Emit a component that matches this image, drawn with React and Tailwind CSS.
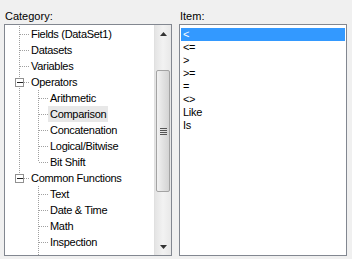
import React from 'react';

const tree = [
  { label: 'Fields (DataSet1)', level: 0 },
  { label: 'Datasets', level: 0 },
  { label: 'Variables', level: 0 },
  { label: 'Operators', level: 0, box: true },
  { label: 'Arithmetic', level: 1, rootLine: true },
  { label: 'Comparison', level: 1, rootLine: true, hot: true },
  { label: 'Concatenation', level: 1, rootLine: true },
  { label: 'Logical/Bitwise', level: 1, rootLine: true },
  { label: 'Bit Shift', level: 1, rootLine: true, last: true },
  { label: 'Common Functions', level: 0, box: true, last: true },
  { label: 'Text', level: 1 },
  { label: 'Date & Time', level: 1 },
  { label: 'Math', level: 1 },
  { label: 'Inspection', level: 1 },
  // next child is scrolled out of view, only its line shows
  { label: '', level: 1 },
];

const items = ['<', '<=', '>', '>=', '=', '<>', 'Like', 'Is'];

const dot = { stroke: '#a0a0a0', strokeWidth: 1, strokeDasharray: '1 1', shapeRendering: 'crispEdges' };

function Lines({ row }) {
  const w = row.level === 0 ? 23 : 42;
  return (
    <svg width={w} height="16" className="shrink-0">
      {row.level === 0 && (
        <>
          <line x1="13.5" y1="0" x2="13.5" y2={row.last ? 8 : 16} style={dot} />
          <line x1={row.box ? 18 : 14} y1="8.5" x2="23" y2="8.5" style={dot} />
          {row.box && (
            <g shapeRendering="crispEdges">
              <rect x="9.5" y="4.5" width="8" height="8" fill="#fff" stroke="#919191" />
              <line x1="11" y1="8.5" x2="17" y2="8.5" stroke="#222" />
            </g>
          )}
        </>
      )}
      {row.level === 1 && (
        <>
          {row.rootLine && <line x1="13.5" y1="0" x2="13.5" y2="16" style={dot} />}
          <line x1="32.5" y1="0" x2="32.5" y2={row.last ? 8 : 16} style={dot} />
          {row.label && <line x1="33" y1="8.5" x2="42" y2="8.5" style={dot} />}
        </>
      )}
    </svg>
  );
}

function Arrow({ up }) {
  return (
    <div className="h-[17px] flex items-center justify-center">
      <svg width="7" height="4">
        <path d={up ? 'M3.5 0 L7 4 L0 4 Z' : 'M0 0 L7 0 L3.5 4 Z'} fill="#333" />
      </svg>
    </div>
  );
}

export default function App() {
  return (
    <div
      className="w-[352px] h-[259px] bg-[#f0f0f0] flex gap-[7px] pl-[4px] pt-[8px] text-[11px] text-black"
      style={{ fontFamily: '"Liberation Sans", Arial, sans-serif' }}
    >
      {/* Category tree */}
      <div className="w-[168px] flex flex-col">
        <div className="h-[16px] leading-[17px] pl-[1px]">Category:</div>
        <div className="h-[232px] border border-[#828790] bg-white flex">
          <div className="flex-1 overflow-hidden pt-px pl-[1px]">
            {tree.map((row, i) => (
              <div key={i} className="h-4 flex items-center">
                <Lines row={row} />
                {row.label && (
                  <span className={`px-[2px] leading-4 whitespace-nowrap tracking-[-0.3px] ${row.hot ? 'bg-[#e8e8e8]' : ''}`}>
                    {row.label}
                  </span>
                )}
              </div>
            ))}
          </div>
          <div className="w-[17px] flex flex-col bg-linear-to-r from-[#e4e4e4] via-[#f2f2f2] to-[#e8e8e8] border-l border-[#e0e0e0]">
            <Arrow up />
            <div className="flex-1">
              <div className="mt-[28px] h-[122px] mx-[1px] rounded-[2px] border border-[#a3a3a3] bg-linear-to-r from-[#f2f2f2] via-[#e2e2e2] to-[#d4d4d4] flex flex-col items-center justify-center gap-[1px]">
                <div className="w-[7px] h-px bg-[#555]" />
                <div className="w-[7px] h-px bg-[#555]" />
                <div className="w-[7px] h-px bg-[#555]" />
                <div className="w-[7px] h-px bg-[#555]" />
              </div>
            </div>
            <Arrow />
          </div>
        </div>
      </div>

      {/* Item list */}
      <div className="w-[168px] flex flex-col">
        <div className="h-[16px] leading-[17px] pl-[1px]">Item:</div>
        <div className="h-[232px] border border-[#828790] bg-white pt-[3px] px-px">
          {items.map((it, i) => (
            <div
              key={it}
              className={`h-[13px] leading-[12px] pl-[2px] tracking-[-0.3px] ${i === 0 ? 'bg-[#3399ff] text-white' : ''}`}
            >
              {it}
            </div>
          ))}
        </div>
      </div>
    </div>
  );
}
